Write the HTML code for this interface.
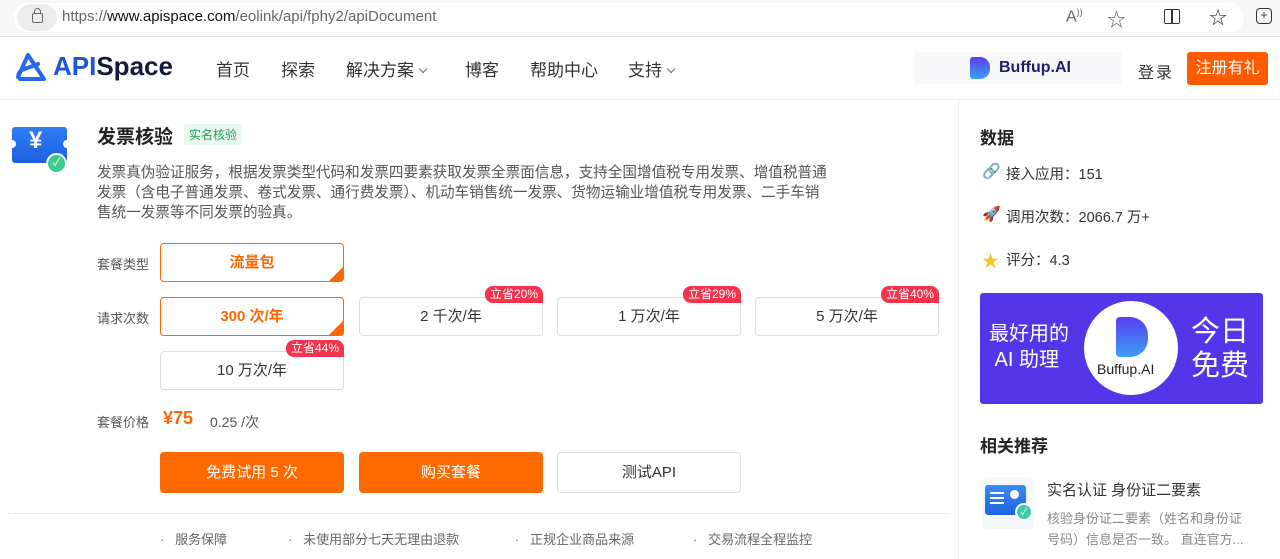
<!DOCTYPE html>
<html><head><meta charset="utf-8"><style>
*{margin:0;padding:0;box-sizing:border-box}
body{width:1280px;height:559px;overflow:hidden;background:#fff;font-family:"Liberation Sans","Noto Sans CJK SC",sans-serif;color:#333;position:relative}
.a{position:absolute}
.chrome{left:0;top:0;width:1280px;height:37px;background:#f7f7f7;border-bottom:1px solid #e3e3e3}
.url{left:14px;top:3px;width:1230px;height:29px;background:#fff;border-radius:15px}
.nav{top:37px;left:0;width:1280px;height:63px;border-bottom:1px solid #eee;background:#fff}
.nv{font-size:17px;color:#333;top:57px}
.chev{display:inline-block;width:6px;height:6px;border-right:1.3px solid #666;border-bottom:1.3px solid #666;transform:rotate(45deg);margin-left:6px;position:relative;top:-4px}
.opt{border:1px solid #ddd;border-radius:4px;height:39px;width:184px;text-align:center;line-height:37px;font-size:15px;color:#333}
.sel{border-color:#f60;color:#f60;font-weight:bold}
.sel:after{content:"";position:absolute;right:0;bottom:0;border-left:14px solid transparent;border-bottom:14px solid #f60}
.tag{top:-12px;right:-1px;background:#f5334d;color:#fff;font-size:12px;line-height:17px;padding:0 5px;border-radius:8px 8px 0 8px;font-weight:normal}
.lbl{font-size:13px;color:#555}
.btn{height:41px;width:184px;border-radius:4px;text-align:center;line-height:41px;font-size:15px}
</style></head><body>
<div class="a chrome"></div>
<div class="a url"></div>
<div class="a" style="left:17px;top:4px;width:40px;height:27px;border-radius:14px;background:#ececec"></div>
<div class="a" style="left:32px;top:13px;width:11px;height:10px;border:1.5px solid #666;border-radius:2px"></div>
<div class="a" style="left:34px;top:8px;width:7px;height:6px;border:1.5px solid #666;border-bottom:none;border-radius:4px 4px 0 0"></div>
<div class="a" style="left:62px;top:8px;font-size:15px;color:#666">https://<span style="color:#111">www.apispace.com</span>/eolink/api/fphy2/apiDocument</div>
<div class="a" style="left:1066px;top:7px;font-size:16px;color:#666">A<sup style="font-size:9px">))</sup></div>
<div class="a" style="left:1107px;top:5px;font-size:19px;color:#666">☆</div>
<div class="a" style="left:1164px;top:9px;width:16px;height:15px;border:1.5px solid #333;border-radius:2px"></div>
<div class="a" style="left:1171px;top:9px;width:1.5px;height:15px;background:#333"></div>
<div class="a" style="left:1209px;top:4px;font-size:18px;color:#333">☆</div>
<div class="a" style="left:1256px;top:8px;width:16px;height:16px;border:1.5px solid #333;border-radius:4px;font-size:12px;line-height:12px;text-align:center">+</div>

<div class="a nav"></div>
<svg class="a" style="left:14px;top:52px" width="34" height="31" viewBox="0 0 34 31"><path d="M14 3 L4 25 M14 3 L30 27 L6 27 Q2 22 8 18 L24 12" stroke="#2469ea" stroke-width="4" fill="none" stroke-linecap="round" stroke-linejoin="round"/></svg>
<div class="a" style="left:53px;top:51px;font-size:26px;font-weight:bold;color:#1a56e0">API<span style="color:#141a3a">Space</span></div>
<div class="a nv" style="left:216px;top:56px">首页</div>
<div class="a nv" style="left:281px;top:56px">探索</div>
<div class="a nv" style="left:346px;top:56px">解决方案<span class="chev"></span></div>
<div class="a nv" style="left:465px;top:56px">博客</div>
<div class="a nv" style="left:530px;top:56px">帮助中心</div>
<div class="a nv" style="left:628px;top:56px">支持<span class="chev"></span></div>
<div class="a" style="left:914px;top:52px;width:208px;height:32px;background:#f9f9fb"></div>
<div class="a" style="left:970px;top:57px;width:20px;height:22px;border-radius:3px 10px 10px 3px;background:linear-gradient(#5a3df0,#3aa0f5)"></div>
<div class="a" style="left:999px;top:59px;font-size:16px;font-weight:bold;color:#1e1e6a">Buffup.AI</div>
<div class="a" style="left:1138px;top:59px;font-size:16px;color:#333;letter-spacing:2px">登录</div>
<div class="a" style="left:1187px;top:52px;width:81px;height:33px;background:#ff5a00;border-radius:3px;color:#fff;font-size:16px;text-align:center;line-height:33px">注册有礼</div>

<div class="a" style="left:958px;top:100px;width:1px;height:459px;background:#eee"></div>

<div class="a" style="left:12px;top:127px;width:55px;height:36px;background:linear-gradient(#2f7df5,#1d5fe0);border-radius:3px"></div>
<div class="a" style="left:8px;top:140px;width:8px;height:8px;background:#fff;border-radius:50%"></div>
<div class="a" style="left:63px;top:140px;width:8px;height:8px;background:#fff;border-radius:50%"></div>
<div class="a" style="left:29px;top:127px;color:#fff;font-size:24px;font-weight:bold">¥</div>
<div class="a" style="left:46px;top:153px;width:21px;height:21px;background:#3ecb8f;border:2px solid #fff;border-radius:50%;color:#fff;font-size:11px;text-align:center;line-height:17px">✓</div>
<div class="a" style="left:97px;top:122px;font-size:19px;font-weight:bold;color:#222">发票核验</div>
<div class="a" style="left:184px;top:124px;background:#e9f8ee;color:#2c9a58;font-size:12px;padding:2px 5px;border-radius:2px">实名核验</div>
<div class="a" style="left:97px;top:163px;width:800px;white-space:nowrap;font-size:14.6px;line-height:20px;color:#555">发票真伪验证服务，根据发票类型代码和发票四要素获取发票全票面信息，支持全国增值税专用发票、增值税普通<br>发票（含电子普通发票、卷式发票、通行费发票）、机动车销售统一发票、货物运输业增值税专用发票、二手车销<br>售统一发票等不同发票的验真。</div>

<div class="a lbl" style="left:97px;top:254px">套餐类型</div>
<div class="a opt sel" style="left:160px;top:243px">流量包</div>
<div class="a lbl" style="left:97px;top:308px">请求次数</div>
<div class="a opt sel" style="left:160px;top:297px">300 次/年</div>
<div class="a opt" style="left:359px;top:297px">2 千次/年<span class="a tag">立省20%</span></div>
<div class="a opt" style="left:557px;top:297px">1 万次/年<span class="a tag">立省29%</span></div>
<div class="a opt" style="left:755px;top:297px">5 万次/年<span class="a tag">立省40%</span></div>
<div class="a opt" style="left:160px;top:351px">10 万次/年<span class="a tag">立省44%</span></div>
<div class="a lbl" style="left:97px;top:412px">套餐价格</div>
<div class="a" style="left:163px;top:408px;font-size:18px;font-weight:bold;color:#f60">¥75</div>
<div class="a" style="left:210px;top:412px;font-size:14px;color:#555">0.25 /次</div>
<div class="a btn" style="left:160px;top:452px;background:#ff6a00;color:#fff">免费试用 5 次</div>
<div class="a btn" style="left:359px;top:452px;background:#ff6a00;color:#fff">购买套餐</div>
<div class="a btn" style="left:557px;top:452px;border:1px solid #ddd;color:#333;line-height:39px">测试API</div>
<div class="a" style="left:8px;top:513px;width:940px;border-top:1px dotted #ddd"></div>
<div class="a lbl" style="left:160px;top:529px;color:#666">·&nbsp;&nbsp; 服务保障</div>
<div class="a lbl" style="left:288px;top:529px;color:#666">·&nbsp;&nbsp; 未使用部分七天无理由退款</div>
<div class="a lbl" style="left:515px;top:529px;color:#666">·&nbsp;&nbsp; 正规企业商品来源</div>
<div class="a lbl" style="left:693px;top:529px;color:#666">·&nbsp;&nbsp; 交易流程全程监控</div>

<div class="a" style="left:980px;top:124px;font-size:17px;font-weight:bold;color:#222">数据</div>
<div class="a" style="left:982px;top:162px;font-size:15px;color:#999">🔗</div>
<div class="a" style="left:1006px;top:163px;font-size:14.5px;color:#333">接入应用：151</div>
<div class="a" style="left:982px;top:205px;font-size:15px;color:#e44">🚀</div>
<div class="a" style="left:1006px;top:206px;font-size:14.5px;color:#333">调用次数：2066.7 万+</div>
<div class="a" style="left:982px;top:247px;font-size:17px;color:#f9c51a">★</div>
<div class="a" style="left:1006px;top:249px;font-size:14.5px;color:#333">评分：4.3</div>

<div class="a" style="left:980px;top:293px;width:283px;height:111px;background:#5535ea;border-radius:3px;overflow:hidden">
<div class="a" style="left:9px;top:28px;color:#fff;font-size:20px;line-height:26px">最好用的<br>&nbsp;AI 助理</div>
<div class="a" style="left:104px;top:8px;width:94px;height:94px;background:#fff;border-radius:50%"></div>
<div class="a" style="left:136px;top:24px;width:32px;height:40px;border-radius:4px 18px 18px 4px;background:linear-gradient(#5a3df0,#3aa0f5)"></div>
<div class="a" style="left:117px;top:68px;font-size:14px;color:#222">Buffup.AI</div>
<div class="a" style="left:211px;top:22px;color:#fff;font-size:29px;line-height:34px">今日<br>免费</div>
</div>

<div class="a" style="left:980px;top:432px;font-size:17px;font-weight:bold;color:#222">相关推荐</div>
<div class="a" style="left:982px;top:477px;width:52px;height:52px;background:#f4f8fd;border-radius:4px"></div>
<div class="a" style="left:985px;top:485px;width:41px;height:30px;background:linear-gradient(#3d8af7,#1f62e2);border-radius:3px"></div>
<div class="a" style="left:990px;top:492px;width:14px;height:2px;background:#fff;box-shadow:0 5px 0 #fff,0 10px 0 #fff"></div>
<div class="a" style="left:1010px;top:490px;width:9px;height:9px;background:#fff;border-radius:50%"></div>
<div class="a" style="left:1015px;top:503px;width:18px;height:18px;background:#3ecbae;border:2px solid #fff;border-radius:50%;color:#fff;font-size:9px;text-align:center;line-height:14px">✓</div>
<div class="a" style="left:1047px;top:479px;font-size:15px;color:#333">实名认证 身份证二要素</div>
<div class="a" style="left:1047px;top:508px;width:200px;font-size:13px;line-height:21px;color:#888">核验身份证二要素（姓名和身份证号码）信息是否一致。 直连官方...</div>
</body></html>
